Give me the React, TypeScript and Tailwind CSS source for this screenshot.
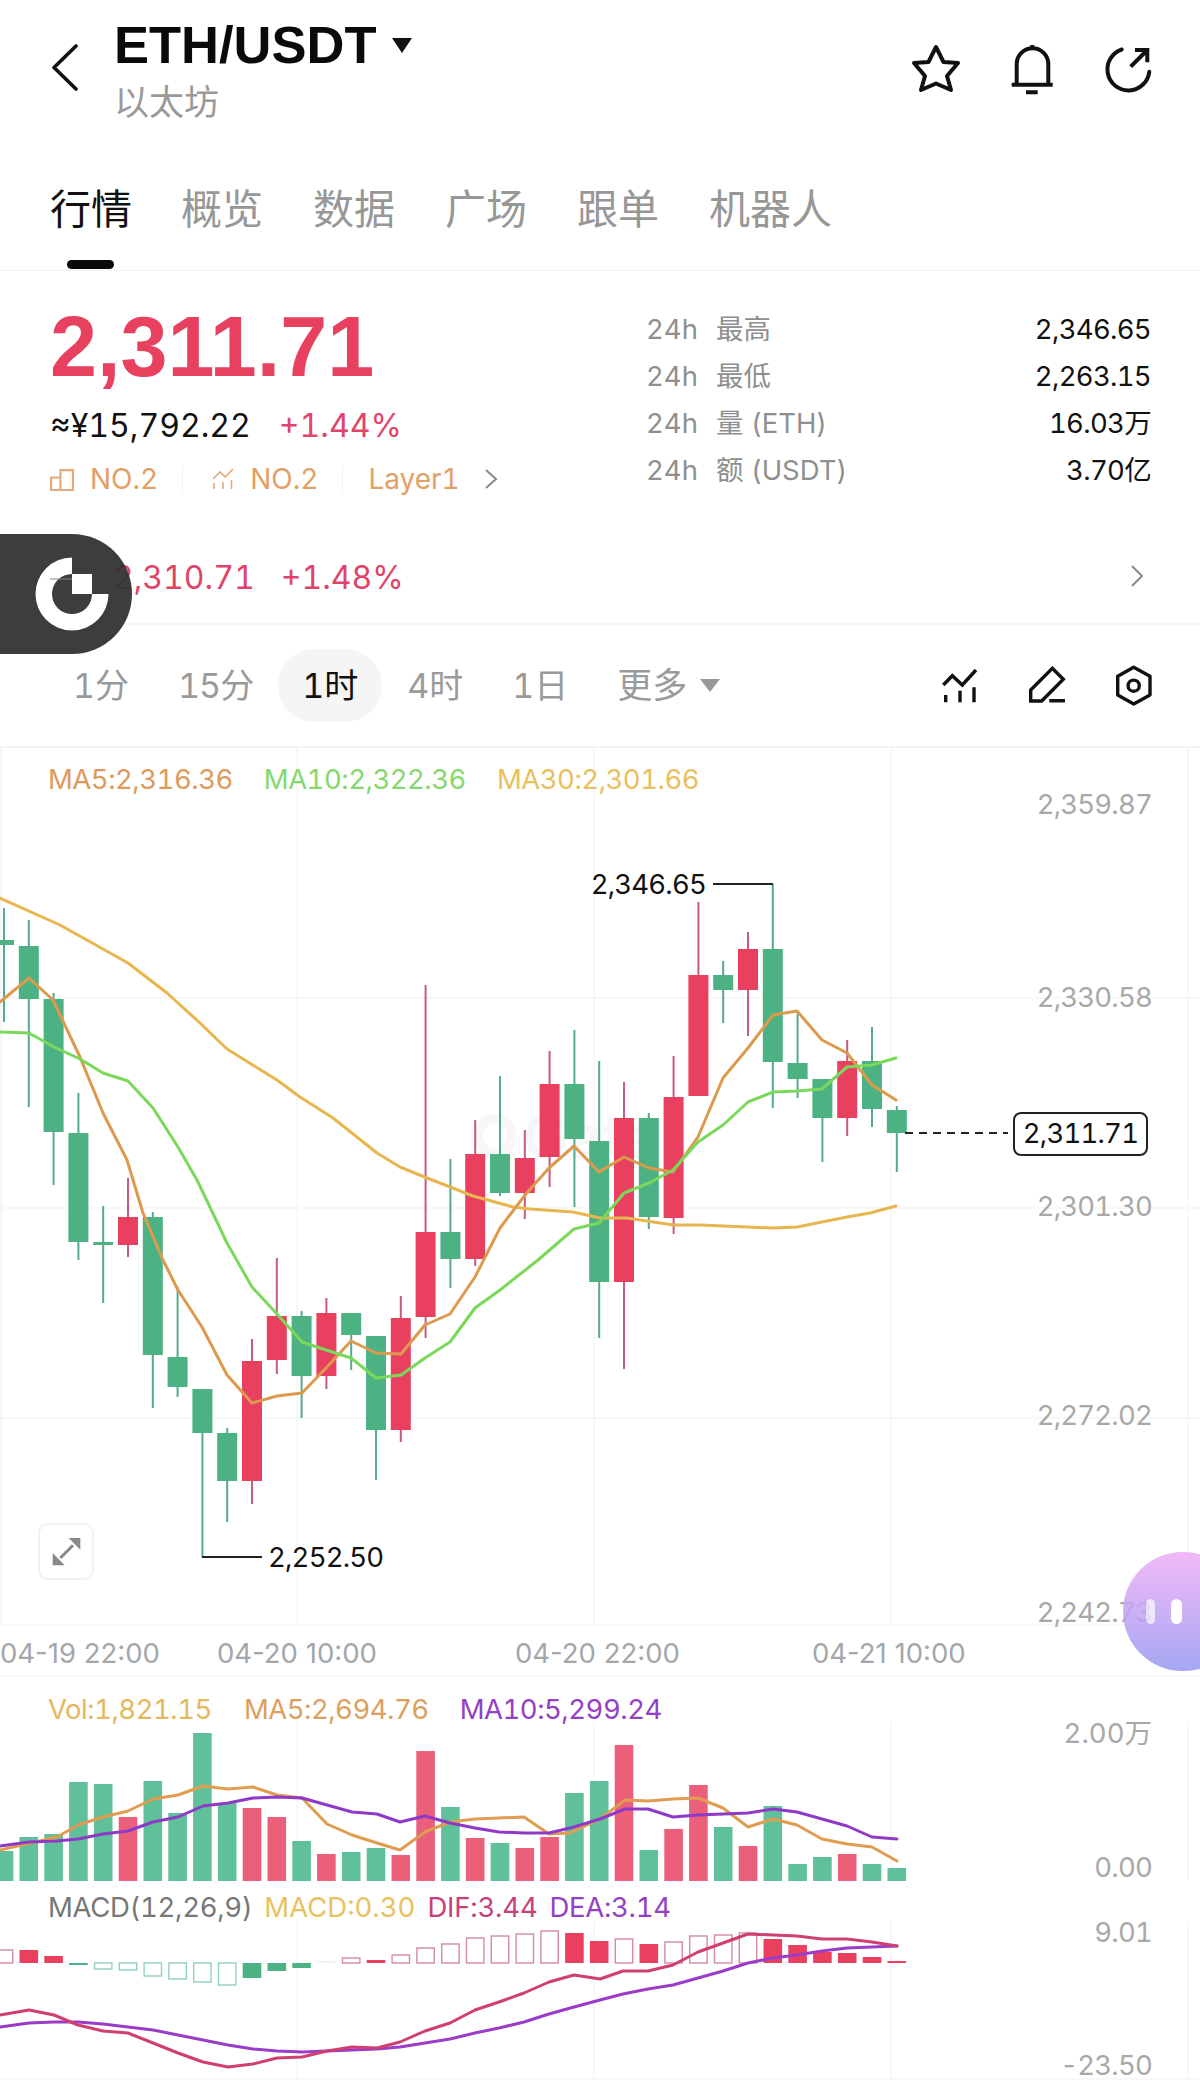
import React from "react";

type Point = [number, number];

// type, wick top, body top, body bottom, wick bottom
const candles: [string, number, number, number, number][] = [
  ["g", 908, 940, 945, 1022],
  ["g", 920, 946, 999, 1107],
  ["g", 993, 999, 1132, 1185],
  ["g", 1093, 1133, 1242, 1260],
  ["g", 1206, 1242, 1245, 1303],
  ["r", 1178, 1217, 1245, 1257],
  ["g", 1212, 1217, 1355, 1408],
  ["g", 1287, 1357, 1387, 1397],
  ["g", 1389, 1389, 1433, 1557],
  ["g", 1428, 1433, 1481, 1522],
  ["r", 1339, 1361, 1481, 1504],
  ["r", 1258, 1316, 1360, 1374],
  ["g", 1311, 1316, 1376, 1418],
  ["r", 1298, 1313, 1376, 1389],
  ["g", 1313, 1313, 1335, 1370],
  ["g", 1336, 1336, 1430, 1480],
  ["r", 1296, 1318, 1430, 1442],
  ["r", 985, 1232, 1317, 1338],
  ["g", 1159, 1232, 1259, 1288],
  ["r", 1120, 1154, 1259, 1266],
  ["g", 1076, 1154, 1193, 1196],
  ["r", 1130, 1158, 1193, 1219],
  ["r", 1051, 1084, 1157, 1187],
  ["g", 1030, 1084, 1139, 1207],
  ["g", 1061, 1141, 1282, 1338],
  ["r", 1082, 1118, 1282, 1369],
  ["g", 1113, 1118, 1217, 1229],
  ["r", 1056, 1097, 1218, 1234],
  ["r", 902, 975, 1096, 1096],
  ["g", 961, 975, 990, 1023],
  ["r", 932, 949, 990, 1036],
  ["g", 884, 949, 1062, 1108],
  ["g", 1013, 1063, 1079, 1098],
  ["g", 1079, 1079, 1118, 1162],
  ["r", 1040, 1061, 1118, 1136],
  ["g", 1027, 1061, 1109, 1127],
  ["g", 1106, 1110, 1133, 1172],
];

const ma5: Point[] = [[0, 1002], [29, 978], [53, 1000], [80, 1057], [103, 1113], [127, 1160], [143, 1213], [163, 1260], [178, 1290], [202, 1327], [227, 1375], [252, 1403], [277, 1396], [302, 1393], [326, 1368], [351, 1341], [376, 1353], [401, 1354], [425, 1325], [450, 1314], [475, 1277], [500, 1228], [525, 1195], [549, 1168], [574, 1146], [599, 1172], [624, 1157], [649, 1168], [673, 1172], [698, 1137], [723, 1078], [748, 1048], [773, 1015], [797, 1011], [822, 1040], [847, 1053], [872, 1085], [896, 1100]];
const ma10: Point[] = [[0, 1032], [29, 1033], [54, 1047], [80, 1059], [103, 1073], [128, 1081], [153, 1108], [178, 1147], [197, 1180], [227, 1243], [252, 1287], [277, 1314], [302, 1342], [326, 1350], [351, 1358], [376, 1378], [401, 1375], [425, 1358], [450, 1342], [475, 1308], [500, 1290], [538, 1260], [574, 1229], [599, 1223], [624, 1193], [649, 1183], [673, 1170], [698, 1142], [723, 1125], [748, 1102], [773, 1092], [797, 1091], [822, 1089], [847, 1067], [872, 1065], [896, 1058]];
const ma30: Point[] = [[0, 898], [60, 925], [128, 963], [167, 993], [200, 1023], [227, 1049], [277, 1080], [300, 1097], [333, 1118], [377, 1153], [400, 1167], [427, 1178], [440, 1183], [473, 1196], [513, 1207], [530, 1209], [573, 1212], [600, 1218], [627, 1218], [673, 1225], [700, 1225], [773, 1228], [797, 1227], [847, 1217], [870, 1213], [896, 1206]];

const volBars: [string, number][] = [
  ["g", 1851], ["g", 1837], ["g", 1834], ["g", 1782], ["g", 1784], ["r", 1817], ["g", 1781], ["g", 1813], ["g", 1733], ["g", 1803],
  ["r", 1808], ["r", 1817], ["g", 1841], ["r", 1854], ["g", 1852], ["g", 1848], ["r", 1855], ["r", 1751], ["g", 1807], ["r", 1838],
  ["g", 1843], ["r", 1848], ["r", 1837], ["g", 1793], ["g", 1781], ["r", 1745], ["g", 1850], ["r", 1829], ["r", 1785], ["g", 1827],
  ["r", 1846], ["g", 1806], ["g", 1864], ["g", 1857], ["r", 1854], ["g", 1864], ["g", 1868],
];
const volMa5: Point[] = [[0, 1850], [57, 1837], [78, 1825], [103, 1817], [128, 1811], [153, 1799], [178, 1795], [203, 1786], [228, 1789], [253, 1787], [277, 1795], [302, 1798], [327, 1824], [352, 1835], [377, 1843], [400, 1850], [425, 1832], [450, 1822], [475, 1819], [499, 1818], [524, 1817], [549, 1834], [570, 1833], [600, 1819], [625, 1800], [648, 1801], [673, 1799], [698, 1798], [723, 1808], [748, 1827], [773, 1819], [797, 1825], [822, 1839], [847, 1844], [872, 1847], [897, 1861]];
const volMa10: Point[] = [[0, 1846], [29, 1842], [57, 1841], [78, 1839], [103, 1834], [128, 1831], [153, 1822], [178, 1817], [203, 1806], [228, 1803], [253, 1798], [277, 1797], [302, 1798], [327, 1805], [352, 1812], [377, 1814], [400, 1822], [425, 1816], [450, 1823], [475, 1828], [499, 1832], [524, 1833], [549, 1833], [574, 1827], [600, 1819], [625, 1809], [648, 1809], [673, 1817], [698, 1815], [723, 1814], [748, 1813], [773, 1809], [797, 1812], [822, 1819], [847, 1826], [872, 1837], [897, 1839]];

// capital letter = hollow bar
const macdBars: [string, number][] = [
  ["R", 1950], ["r", 1950], ["r", 1956], ["g", 1965], ["G", 1969], ["G", 1970], ["G", 1976], ["G", 1979], ["G", 1982], ["G", 1985],
  ["g", 1978], ["g", 1971], ["g", 1968], ["F", 1961], ["R", 1958], ["r", 1960], ["R", 1955], ["R", 1948], ["R", 1944], ["R", 1938],
  ["R", 1936], ["R", 1934], ["R", 1931], ["r", 1933], ["r", 1941], ["R", 1939], ["r", 1944], ["R", 1942], ["R", 1936], ["R", 1935],
  ["R", 1933], ["r", 1939], ["r", 1945], ["r", 1952], ["r", 1953], ["r", 1957], ["r", 1961],
];
const dif: Point[] = [[0, 2015], [29, 2010], [54, 2015], [78, 2025], [103, 2031], [128, 2033], [153, 2043], [178, 2053], [203, 2062], [228, 2067], [253, 2064], [277, 2058], [302, 2057], [327, 2051], [352, 2047], [377, 2048], [400, 2042], [425, 2031], [450, 2023], [475, 2010], [499, 2002], [524, 1993], [549, 1982], [574, 1975], [600, 1979], [623, 1971], [648, 1971], [673, 1965], [698, 1952], [723, 1943], [748, 1934], [773, 1935], [797, 1936], [822, 1939], [847, 1939], [872, 1942], [897, 1946]];
const dea: Point[] = [[0, 2027], [29, 2023], [54, 2022], [78, 2022], [103, 2024], [128, 2027], [153, 2030], [178, 2035], [203, 2040], [228, 2045], [253, 2049], [277, 2051], [302, 2052], [327, 2051], [352, 2050], [377, 2049], [400, 2047], [425, 2043], [450, 2039], [475, 2033], [499, 2028], [524, 2022], [549, 2014], [574, 2007], [600, 2000], [623, 1994], [648, 1989], [673, 1985], [698, 1978], [723, 1971], [748, 1963], [773, 1958], [797, 1955], [822, 1951], [847, 1948], [872, 1947], [897, 1946]];

const candleX = (i: number) => 4 + 24.8 * i;
const pts = (list: Point[]) => list.map((p) => p.join(",")).join(" ");

function Line({ data, color }: { data: Point[]; color: string }) {
  return <polyline points={pts(data)} fill="none" stroke={color} strokeWidth="3" strokeLinejoin="round" strokeLinecap="round" />;
}

function GridLines({ y1, y2 }: { y1: number; y2: number }) {
  return (
    <>
      {[297, 594, 891, 1188].map((x) => (
        <line key={x} x1={x} x2={x} y1={y1} y2={y2} stroke="#f6f6f6" strokeWidth="1.5" />
      ))}
    </>
  );
}

function BackIcon() {
  return (
    <svg width="28" height="48" viewBox="0 0 28 48" fill="none" stroke="#111" strokeWidth="3.6" strokeLinecap="round" strokeLinejoin="round">
      <path d="M25 2 3 23.5 25 45" />
    </svg>
  );
}

function HeaderIcons() {
  return (
    <div className="ml-auto mt-[43px] mr-[44px] flex items-start">
      <svg width="52" height="52" viewBox="0 0 52 52" fill="none" stroke="#111" strokeWidth="4" strokeLinejoin="round">
        <path d="M26 4 33.5 19 48 20 37 33 41 47 26 40.5 11 47 15 33 4 20 18.5 19Z" />
      </svg>
      <svg className="ml-[46px] mt-[-1px]" width="48" height="56" viewBox="0 0 48 56" fill="none" stroke="#111" strokeWidth="4">
        <path d="M8.7 42.7V22a15.8 15.8 0 0 1 31.6 0v20.7M3.7 42.7h41M18 50.3h11.7M24.3 3v4" />
      </svg>
      <svg className="ml-[44px] mt-[1px]" width="56" height="52" viewBox="0 0 56 52" fill="none" stroke="#111" strokeWidth="4" strokeLinecap="round">
        <path d="M21.7 5.5A21 21 0 1 0 49.3 27.7" />
        <path d="M30.7 22.7 47.3 6M35 6h12.3v12.3" strokeLinejoin="miter" strokeLinecap="butt" />
      </svg>
    </div>
  );
}

function Tabs() {
  const others = ["概览", "数据", "广场", "跟单", "机器人"];
  return (
    <div className="h-[141px] border-b border-[#f3f3f3] pl-[50px] pt-[53px] flex items-start gap-[50px] text-[41px] leading-[52px] text-[#979797]">
      <div className="mr-[-1px] flex flex-col items-center">
        <span className="text-[#111]">行情</span>
        <span className="ml-[-2px] mt-[25px] h-[9px] w-[47px] rounded-full bg-[#0a0a0a]" />
      </div>
      {others.map((t) => (
        <span key={t}>{t}</span>
      ))}
    </div>
  );
}

function PriceInfo() {
  const stats = [
    ["最高", "", "2,346.65"],
    ["最低", "", "2,263.15"],
    ["量", " (ETH)", "16.03万"],
    ["额", " (USDT)", "3.70亿"],
  ];
  return (
    <div className="h-[354px] border-b-2 border-[#f5f5f5]">
      <div className="h-[260px] flex">
        <div className="pl-[50px] pt-[31px] w-[647px] shrink-0">
          <div className="font-['Liberation_Sans',sans-serif] text-[84.5px] leading-[90px] font-bold text-[#e8405f]">2,311.71</div>
          <div className="mt-[12px] flex text-[32px] leading-[44px]">
            <span className="text-[#111]">≈¥15,792.22</span>
            <span className="ml-[28px] text-[#e0456a]">+1.44%</span>
          </div>
          <div className="mt-[13px] flex items-center text-[28px] leading-[36px] text-[#e29f66]">
            <svg className="ml-[-1px]" width="25" height="25" viewBox="0 0 24 24" fill="none" stroke="#e5a878" strokeWidth="2">
              <path d="M2 10h9v12H2zM11 3h12v19H11z" />
            </svg>
            <span className="ml-[16px]">NO.2</span>
            <span className="ml-[24px] h-[28px] w-[1px] bg-[#f1f1f1]" />
            <svg className="ml-[28px]" width="24" height="24" viewBox="0 0 24 24" fill="none" stroke="#e5a878" strokeWidth="1.6">
              <path d="M2 12 9 5l5 5 8-8M3 16v6M12 15v7M20.5 13v9" />
            </svg>
            <span className="ml-[15px]">NO.2</span>
            <span className="ml-[24px] h-[28px] w-[1px] bg-[#f1f1f1]" />
            <span className="ml-[25px]">Layer1</span>
            <svg className="ml-[24px]" width="14" height="22" viewBox="0 0 14 22" fill="none" stroke="#8a8a8a" strokeWidth="2">
              <path d="M2 2l10 9-10 9" />
            </svg>
          </div>
        </div>
        <div className="flex-1 pr-[49px] pt-[35px] flex flex-col">
          {stats.map(([name, unit, value]) => (
            <div key={name} className="h-[47px] flex items-center text-[27.5px] text-[#8f8f8f]">
              <span className="w-[70px] ml-[-1px]">24h</span>
              <span>{name}{unit}</span>
              <span className="ml-auto tracking-[-0.7px] text-[#111]">{value}</span>
            </div>
          ))}
        </div>
      </div>
      <div className="h-[93px] pl-[113px] pr-[56px] flex items-center text-[32px] text-[#df4468]">
        <span>2,310.71</span>
        <span className="ml-[26px]">+1.48%</span>
        <svg className="ml-auto mb-[4px]" width="14" height="24" viewBox="0 0 14 24" fill="none" stroke="#8a8a8a" strokeWidth="2">
          <path d="M2 2l10 10L2 22" />
        </svg>
      </div>
    </div>
  );
}

function IntervalBar() {
  return (
    <div className="h-[123px] pl-[49px] pr-[44px] border-b-2 border-[#f3f3f3] flex items-center text-[34px] text-[#9a9a9a]">
      <div className="flex items-center gap-[1px]">
        <span className="px-[24px] leading-[73px]">1分</span>
        <span className="px-[24px] leading-[73px] tracking-[-1px]">15分</span>
        <span className="px-[24px] leading-[73px] rounded-full bg-[#f5f5f5] text-[#111]">1时</span>
        <span className="px-[24px] leading-[73px]">4时</span>
        <span className="px-[24px] leading-[73px]">1日</span>
        <span className="pl-[24px] leading-[73px] text-[35px]">更多</span>
        <span className="ml-[12px] h-0 w-0 border-x-[10px] border-t-[13px] border-x-transparent border-t-[#999]" />
      </div>
      <div className="ml-auto flex items-center">
        <svg width="40" height="40" viewBox="0 0 40 40" fill="none" stroke="#111" strokeWidth="3.4">
          <path d="M3.3 19l9-9.3 10 9.3L36 4M5.7 29v7.3M20 24.7v11.6M34 21.3v15" />
        </svg>
        <svg className="ml-[46px]" width="44" height="44" viewBox="0 0 44 44" fill="none" stroke="#111" strokeWidth="3.4">
          <path d="M26.3 4.3l11 11L15.7 37h-11V26ZM23.3 36.7H39" />
        </svg>
        <svg className="ml-[42px]" width="44" height="46" viewBox="0 0 44 46" fill="none" stroke="#111" strokeWidth="3.4" strokeLinejoin="round">
          <path d="M21.7 4.3 38 13.3V32l-16.3 9L5.7 32V13.3Z" />
          <circle cx="21.7" cy="22.7" r="5.6" />
        </svg>
      </div>
    </div>
  );
}

function MainChart() {
  return (
    <div className="relative h-[878px]">
      {/* faint watermark under the candles */}
      <div className="absolute left-[473px] top-[358px] flex items-center text-[60px] leading-[60px] font-bold text-[#f7f7f7]">
        <span className="h-[44px] w-[44px] rounded-full border-[10px] border-[#f7f7f7]" />
        <span className="ml-[6px]">Gate</span>
      </div>
      <svg className="absolute inset-0" width="1200" height="878" viewBox="0 748 1200 878">
        {[998, 1208, 1418, 1625].map((y) => (
          <line key={y} x1="0" x2="1200" y1={y} y2={y} stroke="#f6f6f6" strokeWidth="1.5" />
        ))}
        <GridLines y1={748} y2={1626} />
        <line x1="1" x2="1" y1="748" y2="1626" stroke="#f3f3f3" strokeWidth="1.5" />
        {candles.map(([c, top, bTop, bBot, low], i) => (
          <line key={i} x1={candleX(i)} x2={candleX(i)} y1={top} y2={low} stroke={c === "g" ? "#54a98e" : "#c75a80"} strokeWidth="2" />
        ))}
        {candles.map(([c, top, bTop, bBot], i) => (
          <rect key={i} x={candleX(i) - 10} y={bTop} width="20" height={bBot - bTop} fill={c === "g" ? "#4db283" : "#e9405f"} />
        ))}
        <Line data={ma30} color="#e8b64e" />
        <Line data={ma5} color="#de9a4c" />
        <Line data={ma10} color="#7ad95a" />
        <path d="M713 884H773M202 1557H262" stroke="#222" strokeWidth="2" fill="none" />
        <path d="M905 1133H1008" stroke="#222" strokeWidth="2" strokeDasharray="8 6" fill="none" />
      </svg>

      <div className="relative pl-[48px] pt-[13px] flex gap-[31px] text-[27.5px] leading-[36px] tracking-[-0.5px]">
        <span className="text-[#dd9a5a]">MA5:2,316.36</span>
        <span className="text-[#85d86c]">MA10:2,322.36</span>
        <span className="text-[#e9c05e]">MA30:2,301.66</span>
      </div>

      <span className="absolute right-[48px] top-[38px] text-[27.5px] leading-[36px] tracking-[-0.8px] text-[#a8a8a8]">2,359.87</span>
      <span className="absolute right-[48px] top-[231px] text-[27.5px] leading-[36px] tracking-[-0.8px] text-[#a8a8a8]">2,330.58</span>
      <span className="absolute right-[48px] top-[440px] text-[27.5px] leading-[36px] tracking-[-0.8px] text-[#a8a8a8]">2,301.30</span>
      <span className="absolute right-[48px] top-[649px] text-[27.5px] leading-[36px] tracking-[-0.8px] text-[#a8a8a8]">2,272.02</span>
      <span className="absolute right-[48px] top-[846px] text-[27.5px] leading-[36px] tracking-[-0.8px] text-[#a8a8a8]">2,242.73</span>

      <span className="absolute right-[494px] top-[118px] text-[27.5px] leading-[36px] tracking-[-0.8px] text-[#111]">2,346.65</span>
      <span className="absolute left-[268px] top-[791px] text-[27.5px] leading-[36px] tracking-[-0.8px] text-[#111]">2,252.50</span>

      <div className="absolute left-[1013px] top-[364px] h-[44px] w-[135px] rounded-[8px] border-2 border-[#222] bg-white flex items-center justify-center text-[27.5px] tracking-[-0.8px] text-[#111]">
        2,311.71
      </div>

      <div className="absolute left-[38px] top-[775px] h-[57px] w-[56px] rounded-[10px] border-2 border-[#f2f2f2] bg-white">
        <svg className="absolute left-[-2px] top-[-2px]" width="56" height="57" viewBox="0 0 56 57" fill="#888">
          <path d="M30.7 15h11.6v11.7ZM14.7 30v12.3h12Z" />
          <path d="M22.3 35 35 22.3" stroke="#888" strokeWidth="3" />
        </svg>
      </div>
    </div>
  );
}

function DateAxis() {
  return (
    <div className="h-[51px] pt-[7px] border-b-2 border-[#f7f7f7] flex items-center whitespace-nowrap normal-nums text-[27.5px] text-[#a3a7ab]">
      <span className="w-[160px] mr-[57px]">04-19 22:00</span>
      <span className="w-[160px] mr-[138px]">04-20 10:00</span>
      <span className="w-[160px] mr-[137px]">04-20 22:00</span>
      <span className="w-[160px]">04-21 10:00</span>
    </div>
  );
}

function VolumePanel() {
  return (
    <div className="relative h-[212px]">
      <svg className="absolute inset-0" width="1200" height="212" viewBox="0 1677 1200 212">
        <GridLines y1={1722} y2={1880} />
        {volBars.map(([c, top], i) => (
          <rect key={i} x={candleX(i) - 9.3} y={top} width="18.6" height={1881 - top} fill={c === "g" ? "#5fc09a" : "#ec5f7a"} />
        ))}
        <Line data={volMa5} color="#e09c50" />
        <Line data={volMa10} color="#8f3ac6" />
      </svg>
      <div className="relative pl-[48px] pt-[14px] flex text-[27.5px] leading-[36px] tracking-[-0.5px]">
        <span className="text-[#e4b85e]">Vol:1,821.15</span>
        <span className="ml-[32px] text-[#dd9f5e]">MA5:2,694.76</span>
        <span className="ml-[31px] text-[#9340c6]">MA10:5,299.24</span>
      </div>
      <span className="absolute right-[48px] top-[38px] text-[27.5px] leading-[36px] text-[#a8a8a8]">2.00万</span>
      <span className="absolute right-[48px] top-[172px] text-[27.5px] leading-[36px] tracking-[-0.8px] text-[#a8a8a8]">0.00</span>
    </div>
  );
}

function MacdBar({ kind, y, i }: { kind: string; y: number; i: number }) {
  const base = 1963;
  const top = Math.min(y, base);
  const h = Math.abs(base - y);
  const x = candleX(i) - 9.3;
  if (kind === "r") return <rect x={x} y={top} width="18.6" height={h} fill="#e9405f" />;
  if (kind === "g") return <rect x={x} y={top} width="18.6" height={h} fill="#4db283" />;
  if (kind === "F") return <rect x={x} y={top} width="18.6" height={h} fill="#f2f2f2" />;
  return <rect x={x + 0.6} y={top} width="17.4" height={h} fill="#fff" stroke={kind === "R" ? "#d58a9e" : "#90d2b8"} strokeWidth="1.4" />;
}

function MacdPanel() {
  return (
    <div className="relative h-[200px]">
      <svg className="absolute inset-0" width="1200" height="200" viewBox="0 1889 1200 200">
        <GridLines y1={1921} y2={2078} />
        <line x1="0" x2="1200" y1="2079" y2="2079" stroke="#f6f6f6" strokeWidth="1.5" />
        {macdBars.map(([k, y], i) => (
          <MacdBar key={i} kind={k} y={y} i={i} />
        ))}
        <Line data={dea} color="#9a3cc8" />
        <Line data={dif} color="#cf3f70" />
      </svg>
      <div className="relative pl-[48px] flex gap-[12px] text-[27.5px] leading-[36px]">
        <span className="tracking-[-0.3px] text-[#777]">MACD(12,26,9)</span>
        <span className="text-[#e7c25e]">MACD:0.30</span>
        <span className="tracking-[-0.2px] text-[#c8407a]">DIF:3.44</span>
        <span className="tracking-[-0.3px] text-[#9340c6]">DEA:3.14</span>
      </div>
      <span className="absolute right-[48px] top-[25px] text-[27.5px] leading-[36px] tracking-[-0.8px] text-[#a8a8a8]">9.01</span>
      <span className="absolute right-[48px] top-[158px] text-[27.5px] leading-[36px] tracking-[-0.8px] text-[#a8a8a8]">-23.50</span>
    </div>
  );
}

export default function App() {
  return (
    <div className="relative h-[2089px] w-[1200px] overflow-hidden bg-white tabular-nums font-[Inter,'Noto_Sans_CJK_SC',sans-serif]">
      <div className="h-[130px] flex items-start">
        <div className="ml-[51px] mt-[44px]">
          <BackIcon />
        </div>
        <div className="ml-[35px] pt-[14px]">
          <div className="flex items-start">
            <span className="font-['Liberation_Sans',sans-serif] text-[52.5px] leading-[62px] font-bold text-[#0a0a0a]">ETH/USDT</span>
            <span className="ml-[15px] mt-[24px] h-0 w-0 border-x-[10.5px] border-t-[15px] border-x-transparent border-t-[#111]" />
          </div>
          <div className="mt-[4px] text-[35px] leading-[44px] text-[#999]">以太坊</div>
        </div>
        <HeaderIcons />
      </div>
      <Tabs />
      <PriceInfo />
      <IntervalBar />
      <MainChart />
      <DateAxis />
      <VolumePanel />
      <MacdPanel />

      {/* gate floating badge, sits over the price row */}
      <div className="absolute left-0 top-[534px] h-[120px] w-[132px] rounded-r-[60px] bg-[#333]/95">
        <svg width="132" height="120" viewBox="0 0 132 120">
          <path d="M72 23.5A36.5 36.5 0 1 0 108.5 60H92A20 20 0 1 1 72 40Z" fill="#fff" />
          <rect x="72" y="40" width="20" height="20" fill="#fff" />
          <path d="M50 45H72" stroke="#888" strokeWidth="1" />
        </svg>
      </div>

      {/* AI assistant bubble on the right edge */}
      <div className="absolute left-[1123px] top-[1552px] h-[119px] w-[120px] rounded-full bg-gradient-to-b from-[#efaef6] to-[#9698f2] opacity-85 flex items-center pl-[23px] gap-[16px]">
        <span className="h-[25px] w-[9px] rounded-full bg-white/70" />
        <span className="h-[25px] w-[11px] rounded-full bg-white" />
      </div>
    </div>
  );
}
